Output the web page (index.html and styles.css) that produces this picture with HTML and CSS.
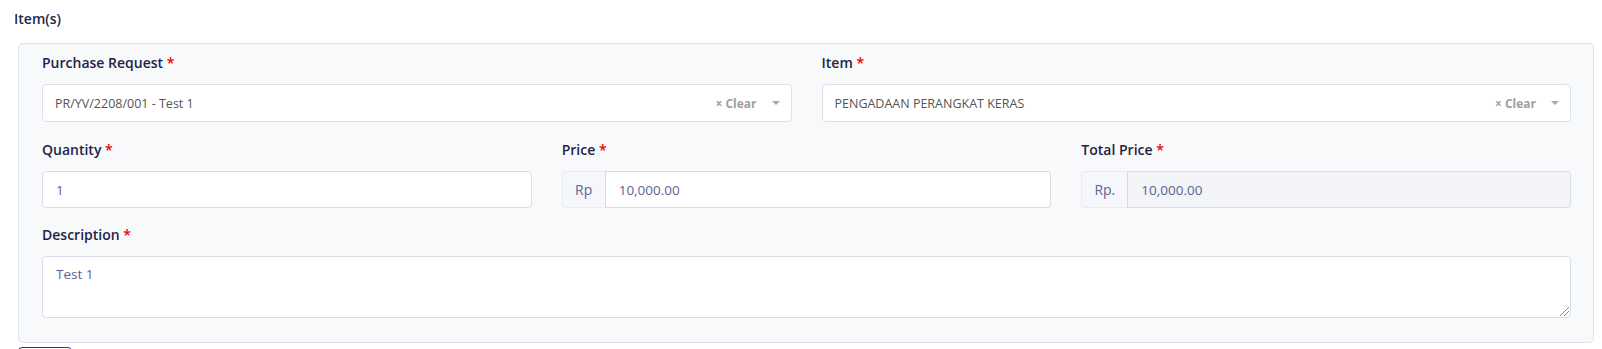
FILE: index.html
```html
<!DOCTYPE html>
<html>
<head>
<meta charset="utf-8">
<link rel="stylesheet" href="styles.css">
</head>
<body>
<div class="section-title">Item(s)</div>
<div class="card">
  <div class="grid grid-2">
    <div class="field">
      <label class="label">Purchase Request <span class="req">*</span></label>
      <div class="select">
        <span class="select-value">PR/YV/2208/001 - Test 1</span>
        <span class="select-clear">× Clear</span>
        <span class="select-arrow"></span>
      </div>
    </div>
    <div class="field">
      <label class="label">Item <span class="req">*</span></label>
      <div class="select">
        <span class="select-value">PENGADAAN PERANGKAT KERAS</span>
        <span class="select-clear">× Clear</span>
        <span class="select-arrow"></span>
      </div>
    </div>
  </div>
  <div class="grid grid-3 row-gap">
    <div class="field">
      <label class="label">Quantity <span class="req">*</span></label>
      <div class="input">1</div>
    </div>
    <div class="field">
      <label class="label">Price <span class="req">*</span></label>
      <div class="group">
        <span class="addon">Rp</span>
        <div class="input group-input">10,000.00</div>
      </div>
    </div>
    <div class="field">
      <label class="label">Total Price <span class="req">*</span></label>
      <div class="group">
        <span class="addon addon-wide">Rp.</span>
        <div class="input group-input disabled">10,000.00</div>
      </div>
    </div>
  </div>
  <div class="field row-gap2">
    <label class="label">Description <span class="req">*</span></label>
    <div class="textarea">Test 1<span class="grip"></span></div>
  </div>
</div>
<button class="btn"></button>
</body>
</html>
```

FILE: styles.css
```css
html, body {
  margin: 0;
  background: #ffffff;
}
body {
  padding: 9px 8px 0 14px;
  font-family: "Open Sans", "Noto Sans", sans-serif;
  color: #23284a;
  overflow: hidden;
}
.section-title {
  font-size: 14px;
  font-weight: 600;
  line-height: 20px;
  color: #23284a;
  margin-bottom: 14px;
}
.card {
  margin-left: 4px;
  border: 1px solid #dde2ec;
  border-radius: 5px;
  background: #f8f9fb;
  padding: 9px 22px 24px 23px;
}
.grid {
  display: grid;
  column-gap: 30px;
}
.grid-2 { grid-template-columns: 1fr 1fr; }
.grid-3 { grid-template-columns: 1fr 1fr 1fr; }
.row-gap { margin-top: 18px; }
.row-gap2 { margin-top: 17px; }
.field {
  display: flex;
  flex-direction: column;
}
.label {
  display: block;
  font-size: 14px;
  font-weight: 600;
  line-height: 20px;
  margin-bottom: 11px;
  color: #1f2447;
}
.req { color: #ee0000; }
.select {
  height: 38px;
  box-sizing: border-box;
  border: 1px solid #dde1ea;
  border-radius: 4px;
  background: #fff;
  display: flex;
  align-items: center;
  padding: 0 11px 0 12px;
}
.select-value {
  flex: 1;
  font-size: 12.5px;
  color: #555555;
}
.select-clear {
  font-size: 12px;
  font-weight: 700;
  color: #a0a0a0;
  margin-right: 15px;
}
.select-arrow {
  width: 0;
  height: 0;
  border-left: 4px solid transparent;
  border-right: 4px solid transparent;
  border-top: 4px solid #a8a8a8;
}
.input {
  height: 37px;
  box-sizing: border-box;
  border: 1px solid #d8dde8;
  border-radius: 4px;
  background: #fff;
  display: flex;
  align-items: center;
  padding: 0 12px 0 13px;
  font-size: 13.5px;
  color: #5b6391;
}
.group {
  display: flex;
  height: 37px;
}
.addon {
  width: 43px;
  box-sizing: border-box;
  border: 1px solid #e8ebf1;
  border-right: none;
  border-radius: 4px 0 0 4px;
  background: #f6f7fa;
  display: flex;
  align-items: center;
  justify-content: center;
  font-size: 14px;
  color: #5b6391;
}
.addon-wide { width: 46px; }
.group-input {
  flex: 1;
  border-radius: 0 4px 4px 0;
  border-left: 1px solid #d4d9e6;
}
.disabled {
  background: #f3f4f7;
}
.textarea {
  position: relative;
  height: 62px;
  box-sizing: border-box;
  border: 1px solid #d8dde8;
  border-radius: 4px;
  background: #fff;
  padding: 7px 13px;
  font-size: 13.5px;
  line-height: 20px;
  color: #5b6391;
}
.grip {
  position: absolute;
  right: 1px;
  bottom: 1px;
  width: 9px;
  height: 9px;
  background: linear-gradient(135deg, transparent 45%, #888 45%, #888 52%, transparent 52%, transparent 70%, #888 70%, #888 77%, transparent 77%);
}
.btn {
  display: block;
  margin: 4px 0 0 4px;
  width: 54px;
  height: 36px;
  border: 1px solid #3b2d8c;
  border-radius: 4px;
  background: #fff;
  padding: 0;
}
```
